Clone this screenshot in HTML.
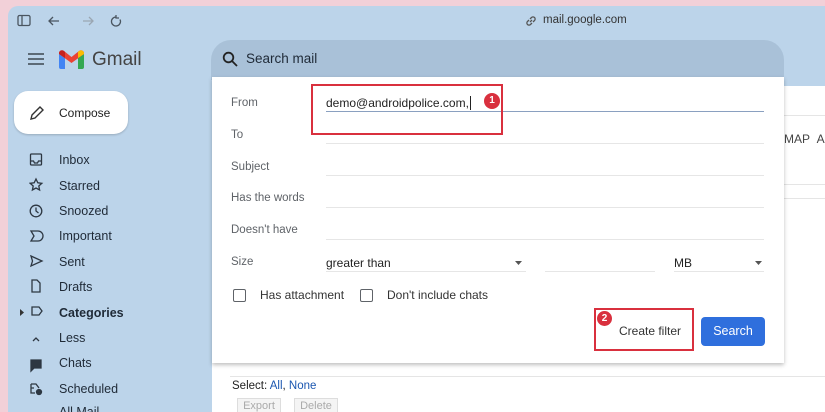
<!DOCTYPE html>
<html><head><style>
*{margin:0;padding:0;box-sizing:border-box}
html,body{width:825px;height:412px;overflow:hidden}
body{background:#f2d0d8;font-family:"Liberation Sans",Arial,sans-serif;position:relative}
.win{position:absolute;left:8px;top:6px;width:817px;height:406px;background:#bcd4ea;border-radius:10px 0 0 0}
.abs{position:absolute}
.nav{position:absolute;left:59px;font-size:12.5px;color:#1f2a37}
.lbl{position:absolute;left:231px;font-size:11.5px;color:#5f6368}
.line{position:absolute;left:326px;width:438px;height:1px;background:#e6e6e6}
.cb{position:absolute;width:13px;height:13px;border:1.6px solid #5f6368;border-radius:2px}
</style></head><body>
<div class="win"></div>
<svg class="abs" style="left:17px;top:14px" width="110" height="14" viewBox="0 0 110 14" fill="none" stroke="#4a5560" stroke-width="1.3">
<rect x="1" y="1.5" width="12" height="10" rx="1.5"/><line x1="5" y1="1.5" x2="5" y2="11.5"/>
<path d="M32 7h10M36 3l-4 4 4 4"/>
<path d="M66 7h10M72 3l4 4-4 4" stroke="#9aa6b2"/>
<path d="M99 3a4.5 4.5 0 1 0 4 2.5M99 1v3h3"/>
</svg>
<div class="abs" style="left:543px;top:14px;font-size:11.5px;color:#333">mail.google.com</div>
<svg class="abs" style="left:525px;top:15px" width="12" height="12" viewBox="0 0 12 12" fill="none" stroke="#555" stroke-width="1.3"><path d="M5 7l2-2M4 5L2.5 6.5a2 2 0 0 0 3 3L7 8M8 7l1.5-1.5a2 2 0 0 0-3-3L5 4"/></svg>
<svg class="abs" style="left:28px;top:53px" width="16" height="12" viewBox="0 0 16 12" stroke="#3c4650" stroke-width="1.6"><path d="M0 1h16M0 6h16M0 11h16"/></svg>
<svg class="abs" style="left:59px;top:50px" width="25" height="19" viewBox="0 0 25 19">
<path d="M0 4v13a2 2 0 0 0 2 2h4V8z" fill="#4285f4"/><path d="M19 8v11h4a2 2 0 0 0 2-2V4z" fill="#34a853"/>
<path d="M0 4l12.5 9L25 4V3a3 3 0 0 0-5-2L12.5 7 5 1A3 3 0 0 0 0 3z" fill="#ea4335"/><path d="M19 8l6-4V3a3 3 0 0 0-5-2l-1 1z" fill="#fbbc04"/><path d="M0 4l6 4V2L5 1A3 3 0 0 0 0 3z" fill="#c5221f"/></svg>
<div class="abs" style="left:92px;top:49px;font-size:19px;color:#444">Gmail</div>
<div class="abs" style="left:14px;top:91px;width:114px;height:43px;background:#fff;border-radius:14px;box-shadow:0 1px 2px rgba(0,0,0,.2)"></div>
<svg class="abs" style="left:29px;top:105px" width="16" height="16" viewBox="0 0 16 16" fill="none" stroke="#333" stroke-width="1.4"><path d="M2 14l1-4 8-8 3 3-8 8z"/></svg>
<div class="abs" style="left:59px;top:106px;font-size:12px;color:#222">Compose</div>
<svg class="abs" style="left:29px;top:152px" width="16" height="250" viewBox="0 0 16 250" fill="none" stroke="#2d3742" stroke-width="1.3">
<rect x="1.5" y="2" width="11" height="11" rx="1"/><path d="M1.5 9h3l1 2h3l1-2h3"/>
<path d="M7 27l1.8 3.8 4 .5-3 2.7.8 4-3.6-2-3.6 2 .8-4-3-2.7 4-.5z"/>
<circle cx="7" cy="59" r="5.8"/><path d="M7 55.5V59l2.5 2"/>
<path d="M2 79h7a5 5 0 0 1 0 10H2l3-5z"/>
<path d="M2 104l11 5-11 5 1.5-5z"/>
<path d="M3 128h5l3 3v9H3z"/>
<path d="M3 155h7l3 4-3 4H3z"/>
<path d="M4 189l3-3 3 3"/>
<path d="M2 208h10v8H5l-3 3z" fill="#2d3742"/>
<path d="M2 232h5l3 4M2 232v9h4M2 236h3"/><circle cx="10" cy="240" r="2.5" fill="#2d3742"/>
</svg>
<svg class="abs" style="left:20px;top:309px" width="5" height="7"><path d="M0 0l4 3.5L0 7z" fill="#333"/></svg>
<div class="nav" style="top:153px">Inbox</div>
<div class="nav" style="top:179px">Starred</div>
<div class="nav" style="top:204px">Snoozed</div>
<div class="nav" style="top:229px">Important</div>
<div class="nav" style="top:255px">Sent</div>
<div class="nav" style="top:280px">Drafts</div>
<div class="nav" style="top:306px;font-weight:bold">Categories</div>
<div class="nav" style="top:331px">Less</div>
<div class="nav" style="top:356px">Chats</div>
<div class="nav" style="top:382px">Scheduled</div>
<div class="nav" style="top:405px">All Mail</div>
<div class="abs" style="left:212px;top:86px;width:613px;height:326px;background:#fff;border-radius:14px 0 0 0"></div>
<div class="abs" style="left:784px;top:132px;font-size:12px;color:#444;white-space:nowrap">MAP&nbsp;&nbsp;Ac</div>
<div class="abs" style="left:784px;top:115px;width:41px;height:1px;background:#e5e5e5"></div>
<div class="abs" style="left:784px;top:184px;width:41px;height:1px;background:#e5e5e5"></div>
<div class="abs" style="left:784px;top:198px;width:41px;height:1px;background:#e5e5e5"></div>
<div class="abs" style="left:230px;top:376px;width:595px;height:1px;background:#e5e5e5"></div>
<div class="abs" style="left:232px;top:380px;font-size:11.5px;color:#222">Select: <span style="color:#1a56b0">All</span>, <span style="color:#1a56b0">None</span></div>
<div class="abs" style="left:237px;top:398px;width:44px;height:16px;border:1px solid #ddd;background:#f4f4f4;font-size:11px;color:#aaa;text-align:center;line-height:15px">Export</div>
<div class="abs" style="left:294px;top:398px;width:44px;height:16px;border:1px solid #ddd;background:#f4f4f4;font-size:11px;color:#aaa;text-align:center;line-height:15px">Delete</div>
<div class="abs" style="left:211px;top:40px;width:573px;height:40px;background:#a9c1d8;border-radius:20px 20px 0 0"></div>
<svg class="abs" style="left:222px;top:51px" width="16" height="16" viewBox="0 0 16 16" fill="none" stroke="#222" stroke-width="1.8"><circle cx="6.5" cy="6.5" r="4.8"/><path d="M10 10l5 5"/></svg>
<div class="abs" style="left:246px;top:51px;font-size:13.5px;color:#1f2a37">Search mail</div>
<div class="abs" style="left:212px;top:77px;width:572px;height:286px;background:#fff;box-shadow:0 2px 4px rgba(0,0,0,.25)"></div>
<div class="lbl" style="top:97px">From</div>
<div class="lbl" style="top:129px">To</div>
<div class="lbl" style="top:161px">Subject</div>
<div class="lbl" style="top:192px">Has the words</div>
<div class="lbl" style="top:224px">Doesn't have</div>
<div class="lbl" style="top:256px">Size</div>
<div class="abs" style="left:326px;top:96px;font-size:12px;color:#222">demo@androidpolice.com,<span style="border-left:1px solid #222;margin-left:1px"></span></div>
<div class="line" style="top:111px;background:#8aa0c0"></div>
<div class="line" style="top:143px"></div>
<div class="line" style="top:175px"></div>
<div class="line" style="top:207px"></div>
<div class="line" style="top:239px"></div>
<div class="abs" style="left:326px;top:256px;font-size:12px;color:#222">greater than</div>
<div class="abs" style="left:326px;top:271px;width:200px;height:1px;background:#e6e6e6"></div>
<div class="abs" style="left:545px;top:271px;width:110px;height:1px;background:#e6e6e6"></div>
<div class="abs" style="left:674px;top:256px;font-size:12px;color:#222">MB</div>
<div class="abs" style="left:674px;top:271px;width:90px;height:1px;background:#e6e6e6"></div>
<svg class="abs" style="left:515px;top:261px" width="7" height="4"><path d="M0 0h7L3.5 4z" fill="#555"/></svg>
<svg class="abs" style="left:755px;top:261px" width="7" height="4"><path d="M0 0h7L3.5 4z" fill="#555"/></svg>
<div class="cb" style="left:233px;top:289px"></div>
<div class="abs" style="left:260px;top:288px;font-size:12px;color:#333">Has attachment</div>
<div class="cb" style="left:360px;top:289px"></div>
<div class="abs" style="left:387px;top:288px;font-size:12px;color:#333">Don't include chats</div>
<div class="abs" style="left:619px;top:324px;font-size:12px;color:#333">Create filter</div>
<div class="abs" style="left:701px;top:317px;width:64px;height:29px;background:#2f6fdd;border-radius:4px;color:#fff;font-size:12.5px;text-align:center;line-height:29px">Search</div>
<div class="abs" style="left:311px;top:84px;width:192px;height:51px;border:2px solid #d9303e"></div>
<div class="abs" style="left:484px;top:93px;width:16px;height:16px;border-radius:50%;background:#d9303e;color:#fff;font-size:10px;font-weight:bold;text-align:center;line-height:16px">1</div>
<div class="abs" style="left:594px;top:308px;width:100px;height:43px;border:2px solid #d9303e"></div>
<div class="abs" style="left:597px;top:311px;width:15px;height:15px;border-radius:50%;background:#d9303e;color:#fff;font-size:10px;font-weight:bold;text-align:center;line-height:15px">2</div>
</body></html>
